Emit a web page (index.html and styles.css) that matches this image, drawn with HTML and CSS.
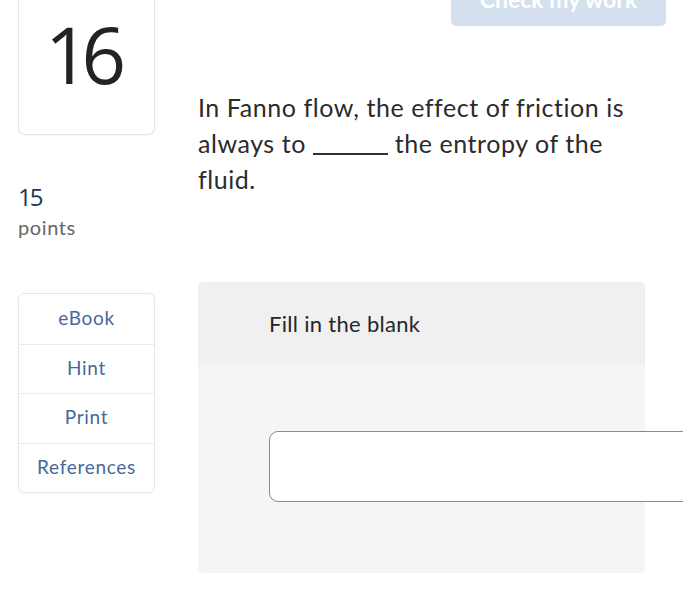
FILE: index.html
```html
<!DOCTYPE html>
<html lang="en">
<head>
<meta charset="utf-8">
<title>Question 16</title>
<link rel="stylesheet" href="styles.css">
</head>
<body>
<div class="page">
  <aside class="side">
    <div class="qnum">16</div>
    <div class="points">
      <span class="pts-val">15</span>
      <span class="pts-label">points</span>
    </div>
    <nav class="tools">
      <a class="tool">eBook</a>
      <a class="tool">Hint</a>
      <a class="tool">Print</a>
      <a class="tool">References</a>
    </nav>
  </aside>
  <main class="main">
    <div class="toolbar">
      <button class="check">Check my work</button>
    </div>
    <p class="question">In Fanno flow, the effect of friction is always to <span class="blank"></span> the entropy of the fluid.</p>
    <section class="panel">
      <div class="panel-head">Fill in the blank</div>
      <div class="panel-body">
        <input class="answer" type="text" aria-label="Answer">
      </div>
    </section>
  </main>
</div>
</body>
</html>
```

FILE: styles.css
```css
html, body {
  margin: 0;
  padding: 0;
  background: #ffffff;
}

body {
  font-family: "Lato", "Open Sans", sans-serif;
  color: #2b2b2b;
  overflow: hidden;
  height: 601px;
}

.page {
  display: grid;
  grid-template-columns: 137px 485px;
  column-gap: 43px;
  padding-left: 18px;
  margin-top: -18px;
}

/* left column */
.side {
  display: flex;
  flex-direction: column;
}

.qnum {
  box-sizing: border-box;
  height: 153px;
  border: 1px solid #e4e4e4;
  border-top: none;
  border-radius: 0 0 7px 7px;
  box-shadow: 0 1px 2px rgba(0,0,0,0.04);
  display: flex;
  justify-content: center;
  padding: 33px 10px 0 0;
  font-family: "Open Sans", "Lato", sans-serif;
  font-size: 78px;
  line-height: 78px;
  color: #232323;
  letter-spacing: -8px;
}

.points {
  display: flex;
  flex-direction: column;
  margin-top: 47px;
}

.pts-val {
  font-family: "Open Sans", "Lato", sans-serif;
  font-size: 24px;
  line-height: 30px;
  letter-spacing: -2px;
  color: #1c3557;
}

.pts-label {
  font-size: 20px;
  line-height: 30px;
  letter-spacing: 0.6px;
  color: #666666;
}

.tools {
  margin-top: 51px;
  display: flex;
  flex-direction: column;
  border: 1px solid #e6e6e6;
  border-radius: 6px;
  box-shadow: 0 1px 2px rgba(0,0,0,0.04);
}

.tool {
  height: 49.5px;
  box-sizing: border-box;
  padding-bottom: 3px;
  display: flex;
  align-items: center;
  justify-content: center;
  font-size: 19px;
  letter-spacing: 0.7px;
  color: #46699a;
  border-top: 1px solid #ebebeb;
}

.tool:first-child {
  border-top: none;
}

/* right column */
.main {
  overflow: hidden;
  display: flex;
  flex-direction: column;
}

.toolbar {
  display: flex;
  justify-content: flex-end;
  padding-right: 17px;
}

.check {
  width: 215px;
  height: 44px;
  border: none;
  border-radius: 5px;
  background: #d5e0ee;
  color: #ffffff;
  font-family: inherit;
  font-size: 23px;
  font-weight: 700;
  padding: 0 0 10px;
}

.question {
  margin: 63px 0 0;
  width: 450px;
  font-size: 25px;
  line-height: 36px;
  letter-spacing: 0.55px;
  color: #2b2b2b;
}

.blank {
  display: inline-block;
  width: 75px;
  height: 1px;
  border-bottom: 2px solid #333333;
  vertical-align: -2px;
}

.panel {
  margin-top: 85px;
  width: 447px;
  border-radius: 5px;
  background: #f5f5f5;
}

.panel-head {
  height: 83px;
  box-sizing: border-box;
  padding-left: 71px;
  display: flex;
  align-items: center;
  background: #f0f0f0;
  border-radius: 5px 5px 0 0;
  font-size: 22px;
  letter-spacing: 0.3px;
  color: #262626;
}

.panel-body {
  height: 208px;
  box-sizing: border-box;
  padding: 66px 0 0 71px;
}

.answer {
  display: block;
  box-sizing: border-box;
  width: 480px;
  height: 71px;
  border: 1.5px solid #8a8a8a;
  border-radius: 9px;
  background: #ffffff;
  font-family: inherit;
  font-size: 20px;
}
```
